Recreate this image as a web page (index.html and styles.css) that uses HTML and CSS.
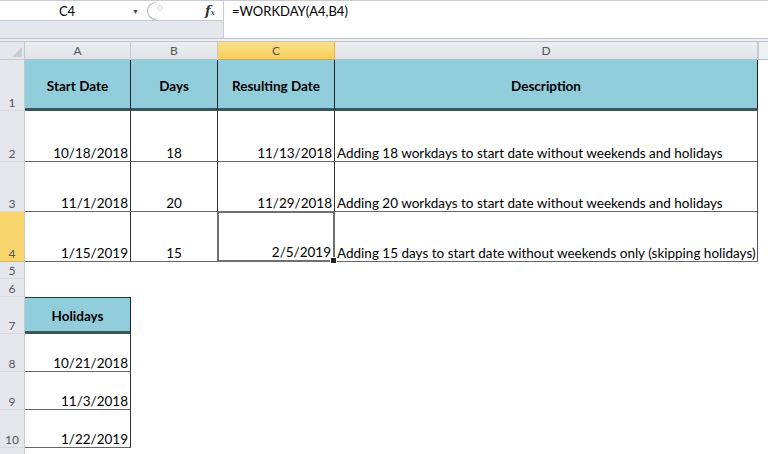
FILE: index.html
```html
<!DOCTYPE html>
<html>
<head>
<meta charset="utf-8">
<link rel="stylesheet" href="styles.css">
</head>
<body>
<div class="app">
  <div class="fbar">
    <div class="left">
      <div class="top">
        <div class="namebox"><span class="name">C4</span><span class="arrow">▼</span></div>
        <div class="pill">
          <svg width="20" height="20" viewBox="0 0 20 20"><path d="M10 1.5 A8.5 8.5 0 0 0 10 18.5" fill="none" stroke="#b9bec6" stroke-width="1.2"/><circle cx="14" cy="7" r="2.2" fill="none" stroke="#d0d3d8" stroke-width="1"/></svg>
        </div>
        <div class="fx"><i>f</i><span>x</span></div>
      </div>
      <div class="under"></div>
    </div>
    <div class="formula">=WORKDAY(A4,B4)</div>
  </div>
  <div class="sep"></div>
  <div class="sheet">
    <div class="corner"><svg width="10" height="10" viewBox="0 0 10 10"><path d="M10 0 L10 10 L0 10 Z" fill="#c9ccd1"/></svg></div>
    <div class="ch">A</div>
    <div class="ch">B</div>
    <div class="ch sel">C</div>
    <div class="ch">D</div>
    <div class="ch fill"></div>

    <div class="rh">1</div>
    <div class="c hd">Start Date</div>
    <div class="c hd">Days</div>
    <div class="c hd">Resulting Date</div>
    <div class="c hd">Description</div>
    <div class="f"></div>

    <div class="rh">2</div>
    <div class="c r">10/18/2018</div>
    <div class="c m">18</div>
    <div class="c r">11/13/2018</div>
    <div class="c l">Adding 18 workdays to start date without weekends and holidays</div>
    <div class="f"></div>

    <div class="rh">3</div>
    <div class="c r">11/1/2018</div>
    <div class="c m">20</div>
    <div class="c r">11/29/2018</div>
    <div class="c l">Adding 20 workdays to start date without weekends and holidays</div>
    <div class="f"></div>

    <div class="rh rsel">4</div>
    <div class="c r">1/15/2019</div>
    <div class="c m">15</div>
    <div class="c r active">2/5/2019</div>
    <div class="c l">Adding 15 days to start date without weekends only (skipping holidays)</div>
    <div class="f"></div>

    <div class="rh">5</div>
    <div class="e"></div><div class="e"></div><div class="e"></div><div class="e"></div><div class="f"></div>

    <div class="rh">6</div>
    <div class="e"></div><div class="e"></div><div class="e"></div><div class="e"></div><div class="f"></div>

    <div class="rh">7</div>
    <div class="c hd hol">Holidays</div>
    <div class="e"></div><div class="e"></div><div class="e"></div><div class="f"></div>

    <div class="rh">8</div>
    <div class="c r">10/21/2018</div>
    <div class="e"></div><div class="e"></div><div class="e"></div><div class="f"></div>

    <div class="rh">9</div>
    <div class="c r">11/3/2018</div>
    <div class="e"></div><div class="e"></div><div class="e"></div><div class="f"></div>

    <div class="rh">10</div>
    <div class="c r">1/22/2019</div>
    <div class="e"></div><div class="e"></div><div class="e"></div><div class="f"></div>

    <div class="rh"></div>
    <div class="e"></div><div class="e"></div><div class="e"></div><div class="e"></div><div class="f"></div>
  </div>
</div>
</body>
</html>
```
FILE: styles.css
```css
* { box-sizing: border-box; }
html, body { margin: 0; padding: 0; background: #fff; }
body { width: 768px; height: 454px; overflow: hidden; font-family: "Lato", "Open Sans", sans-serif; font-size: 13.5px; color: #000; }
.app { width: 768px; height: 454px; overflow: hidden; }

.fbar { display: flex; height: 38px; border-top: 1px solid #c9cdd3; }
.left { width: 224px; display: flex; flex-direction: column; border-right: 1px solid #c9cdd3; }
.top { height: 20px; display: flex; align-items: center; background: #fff; border-bottom: 1px solid #c9cdd3; }
.namebox { width: 146px; height: 100%; display: flex; align-items: center; }
.name { flex: 1; text-align: center; font-size: 13px; padding-left: 2px; }
.arrow { font-size: 7px; color: #444; width: 14px; }
.pill { width: 22px; height: 20px; display: flex; align-items: center; }
.fx { flex: 1; text-align: right; padding-right: 8px; font-family: "DejaVu Serif", serif; font-size: 13px; color: #333; }
.fx i { font-weight: bold; }
.fx span { font-size: 8px; font-style: italic; }
.under { flex: 1; background: #e4e7eb; }
.formula { flex: 1; padding: 2px 8px; font-size: 13px; line-height: 16px; }

.sep { height: 4px; border-top: 1px solid #bfc4cb; border-bottom: 1px solid #bfc4cb; background: #eef0f3; }

.sheet {
  display: grid;
  grid-template-columns: 25px 106px 87px 117px 423px 10px;
  grid-template-rows: 18px 51px 51px 50px 50px 17px 18px 37px 38px 38px 38px 20px;
}
.corner { background: #e4e7eb; border-right: 1px solid #c5c9cf; border-bottom: 1px solid #c5c9cf; display: flex; align-items: flex-end; justify-content: flex-end; padding: 0 2px 2px 0; }
.ch { background: linear-gradient(#eceef1, #dfe2e6); border-right: 1px solid #c5c9cf; border-bottom: 1px solid #b9bec5; display: flex; align-items: center; justify-content: center; color: #555; font-size: 12px; }
.ch.sel { background: linear-gradient(#fbe08a, #f7cd5a); border-right: 1px solid #e0b24a; border-bottom: 1px solid #d9a73c; color: #555; }
.ch.fill { background: #eef0f2; border-right: none; border-left: 1px solid #c5c9cf; }

.rh { background: #e4e7eb; border-right: 1px solid #c5c9cf; border-bottom: 1px solid #d6d9de; display: flex; align-items: flex-end; justify-content: center; color: #555; font-size: 12px; padding-bottom: 0; }
.rh.rsel { background: #f8d56d; border-bottom-color: #e2b54a; }

.c { display: flex; align-items: flex-end; padding: 0 2px 0; white-space: nowrap; border-right: 1px solid #333; border-bottom: 1px solid #666; }
.c.r { justify-content: flex-end; }
.c.m { justify-content: center; }
.c.l { justify-content: flex-start; border-right: 1px solid #555; }
.c.hd { background: #92cddc; font-weight: bold; justify-content: center; align-items: center; border-bottom: 3px solid #35585f; border-right: 1px solid #222; padding-top: 3px; }
.c.hol { border-top: 1px solid #333; }
.c.active { position: relative; border: 2px solid #707070; margin: -1px 0 0 -1px; }
.c.active::after { content: ""; position: absolute; right: -4px; bottom: -4px; width: 5px; height: 5px; background: #222; border: 1px solid #fff; }
.e { }
.f { }
```
